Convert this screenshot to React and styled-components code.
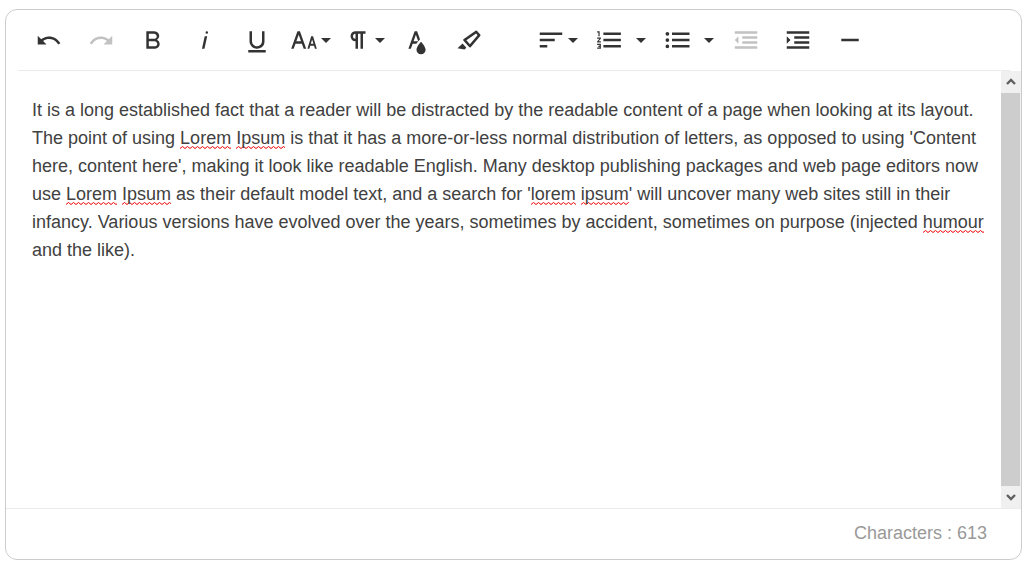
import React from "react";
import styled, { createGlobalStyle } from "styled-components";

const GlobalStyle = createGlobalStyle`
  *, *::before, *::after { box-sizing: border-box; }
  body {
    margin: 0;
    background: #fff;
    font-family: "Liberation Sans", Arial, sans-serif;
    color: #414141;
  }
`;

const Page = styled.main`
  display: flex;
  min-height: 100vh;
  padding: 9px 5px;
`;

const Editor = styled.section`
  flex: 1;
  min-width: 0;
  display: flex;
  flex-direction: column;
  border: 1px solid #ccc;
  border-radius: 12px;
  overflow: hidden;
`;

const Toolbar = styled.div`
  display: flex;
  align-items: center;
  margin: 0 11px 0 12px;
  height: 61px;
  padding-left: 5px;
  border-bottom: 1px solid #ebebeb;
`;

const Group = styled.div`
  display: flex;
  & + & { margin-left: 35px; }
`;

const ToolButton = styled.button`
  display: flex;
  align-items: center;
  justify-content: center;
  flex: none;
  gap: 2px;
  width: ${(p) => p.$width || 52}px;
  height: 48px;
  padding: 0;
  border: 0;
  background: transparent;
  color: #333;
  cursor: pointer;
  &:disabled { color: #c2c2c2; cursor: default; }
`;

const CaretButton = styled(ToolButton)`
  width: 18px;
  justify-content: flex-start;
  padding-left: 2px;
`;

const Icon = styled.svg`
  display: block;
  width: 30px;
  height: 30px;
  fill: currentColor;
  flex: none;
`;

const CaretIcon = styled.svg`
  display: block;
  width: 10px;
  height: 5px;
  fill: currentColor;
  flex: none;
`;

const Body = styled.div`
  flex: 1;
  display: flex;
  min-height: 200px;
`;

const Content = styled.div`
  flex: 1;
  min-width: 0;
  padding: 25px 10px 25px 26px;
  font-size: 18px;
  line-height: 28px;
  outline: none;
  p { margin: 0; }
`;

const Misspelled = styled.span`
  padding-bottom: 1px;
  background: url("data:image/svg+xml,%3Csvg xmlns='http://www.w3.org/2000/svg' width='5' height='3'%3E%3Cpath d='M-2.500 .5L0 2.500L2.500 .5L5 2.500L7.500 .5' fill='none' stroke='%23f00000'/%3E%3C/svg%3E")
    repeat-x left bottom;
`;

const ScrollRail = styled.div`
  display: flex;
  flex-direction: column;
  width: 20px;
  background: #f0f0f0;
`;

const ScrollButton = styled.button`
  display: flex;
  align-items: center;
  justify-content: center;
  height: 22px;
  padding: 0;
  border: 0;
  background: #f0f0f0;
  color: #606060;
`;

const ScrollArrow = styled.svg`
  width: 12px;
  height: 8px;
  fill: none;
  stroke: currentColor;
  stroke-width: 2.4;
`;

const ScrollThumb = styled.div`
  flex: 1;
  margin-right: 1px;
  background: #cdcdcd;
`;

const Footer = styled.footer`
  display: flex;
  align-items: center;
  justify-content: flex-end;
  height: 51px;
  padding: 0 34px 2px 0;
  border-top: 1px solid #ebebeb;
  font-size: 18px;
  color: #999;
`;

const paths = {
  undo: "M10.4 9.4c-1.7.3-3.2.9-4.6 2L3 8.5v7h7l-2.7-2.7c3.7-2.6 8.8-1.8 11.5 1.9.2.2.4.5.5.8l1.8-.9c-2.3-3.9-6.6-6-10.7-5.2z",
  redo: "M13.6 9.4c1.7.3 3.2.9 4.6 2L21 8.5v7h-7l2.7-2.7C13 10.2 7.9 11 5.3 14.7c-.2.3-.4.5-.5.8L3 14.6C5.1 10.8 9.3 8.7 13.6 9.4z",
  bold: "M15.25,11.8h0A3.68,3.68,0,0,0,17,9a3.93,3.93,0,0,0-3.86-4H6.65V19h7a3.74,3.74,0,0,0,3.7-3.78V15.1A3.64,3.64,0,0,0,15.25,11.8ZM8.65,7h4.2a2.09,2.09,0,0,1,2,1.3,2.09,2.09,0,0,1-1.37,2.61,2.23,2.23,0,0,1-.63.09H8.65Zm4.6,10H8.65V13h4.6a2.09,2.09,0,0,1,2,1.3,2.09,2.09,0,0,1-1.37,2.61A2.23,2.23,0,0,1,13.25,17Z",
  italic: "M11.76,9h2l-2.2,10h-2Zm1.68-4a1,1,0,1,0,1,1,1,1,0,0,0-1-1Z",
  underline: "M19,20v2H5V20ZM16,13.2a4,4,0,0,1-5.74,3.4A3.75,3.75,0,0,1,8,13.085V5H6v8.21a6,6,0,0,0,8,5.44A5.851,5.851,0,0,0,18,13V5H16Z",
  size: "M20.75,19h1.5l-3-10h-1.5l-3,10h1.5L17,16.5h3Zm-3.3-4,1.05-3.5L19.55,15Zm-5.7,4h2l-5-14h-2l-5,14h2l1.43-4h5.14ZM5.89,13,7.75,7.79,9.61,13Z",
  paragraph: "M10.15,5A4.11,4.11,0,0,0,6.08,8.18,4,4,0,0,0,10,13v6h2V7h2V19h2V7h2V5ZM8,9a2,2,0,0,1,2-2v4A2,2,0,0,1,8,9Z",
  color: "M15.2,13.494s-3.6,3.9-3.6,6.3a3.65,3.65,0,0,0,7.3.1v-.1C18.9,17.394,15.2,13.494,15.2,13.494Zm-1.47-1.357.669-.724L12.1,5h-2l-5,14h2l1.43-4h2.943A24.426,24.426,0,0,1,13.726,12.137ZM11.1,7.8l1.86,5.2H9.244Z",
  highlight: "M9.918,12.241l7.748-5.39,1.179,1.296-6.094,7.207L9.918,12.241M7.587,12.652l4.536,4.983a.934.934,0,0,0,1.395-.091L20.969,8.731A.908.908,0,0,0,20.991,7.533l-2.513-2.761a.908.908,0,0,0-1.195-.091L7.809,11.271A.934.934,0,0,0,7.587,12.652ZM2.794,18.528,8.411,19.5l1.479-1.346-3.029-3.328Z",
  align: "M3 18h6v-2H3v2zM3 6v2h18V6H3zm0 7h12v-2H3v2z",
  ordered: "M2.5,16h2v.5h-1v1h1V18h-2v1h3V15h-3Zm1-7h1V5h-2V6h1Zm-1,2H4.3L2.5,13.1V14h3V13H3.7l1.8-2.1V10h-3Zm5-5V8h14V6Zm0,12h14V16H7.5Zm0-5h14V11H7.5Z",
  bullets: "M4.3 5.5a1.5 1.5 0 1 0 0 3a1.5 1.5 0 0 0 0-3zm0 5a1.5 1.5 0 1 0 0 3a1.5 1.5 0 0 0 0-3zm0 5a1.5 1.5 0 1 0 0 3a1.5 1.5 0 0 0 0-3zM8 6h14v2H8zm0 5h14v2H8zm0 5h14v2H8z",
  outdent: "M3 5h18v2H3zM9 9h12v2H9zM9 13h12v2H9zM3 17h18v2H3zM3 12l3-3v6z",
  indent: "M3 5h18v2H3zM9 9h12v2H9zM9 13h12v2H9zM3 17h18v2H3zM6 12l-3-3v6z",
  rule: "M5 11h14v2H5z",
};

const Glyph = ({ name }) => (
  <Icon viewBox="0 0 24 24" aria-hidden="true"><path d={paths[name]} /></Icon>
);

const Caret = () => (
  <CaretIcon viewBox="0 0 10 5" aria-hidden="true"><path d="M0 0h10L5 5z" /></CaretIcon>
);

const Tool = ({ name, label, disabled }) => (
  <ToolButton type="button" aria-label={label} disabled={disabled}><Glyph name={name} /></ToolButton>
);

const MenuTool = ({ name, label }) => (
  <ToolButton type="button" aria-label={label} aria-haspopup="true" $width={54}>
    <Glyph name={name} /><Caret />
  </ToolButton>
);

const SplitTool = ({ name, label }) => (
  <>
    <ToolButton type="button" aria-label={label} $width={50}><Glyph name={name} /></ToolButton>
    <CaretButton type="button" aria-label={`${label} options`} aria-haspopup="true"><Caret /></CaretButton>
  </>
);

export default function App() {
  return (
    <>
      <GlobalStyle />
      <Page>
        <Editor>
          <Toolbar role="toolbar" aria-label="Formatting">
            <Group>
              <Tool name="undo" label="Undo" />
              <Tool name="redo" label="Redo" disabled />
              <Tool name="bold" label="Bold" />
              <Tool name="italic" label="Italic" />
              <Tool name="underline" label="Underline" />
              <MenuTool name="size" label="Font size" />
              <MenuTool name="paragraph" label="Paragraph format" />
              <Tool name="color" label="Text color" />
              <Tool name="highlight" label="Background color" />
            </Group>
            <Group>
              <MenuTool name="align" label="Align" />
              <SplitTool name="ordered" label="Ordered list" />
              <SplitTool name="bullets" label="Unordered list" />
              <Tool name="outdent" label="Decrease indent" disabled />
              <Tool name="indent" label="Increase indent" />
              <Tool name="rule" label="Insert horizontal line" />
            </Group>
          </Toolbar>
          <Body>
            <Content
              role="textbox"
              aria-multiline="true"
              aria-label="Document text"
              contentEditable
              suppressContentEditableWarning
              spellCheck={false}
            >
              <p>
                It is a long established fact that a reader will be distracted by the readable content of a page
                when looking at its layout. The point of using <Misspelled>Lorem</Misspelled>{" "}
                <Misspelled>Ipsum</Misspelled> is that it has a more-or-less normal distribution of letters, as
                opposed to using 'Content here, content here', making it look like readable English. Many desktop
                publishing packages and web page editors now use <Misspelled>Lorem</Misspelled>{" "}
                <Misspelled>Ipsum</Misspelled> as their default model text, and a search for '
                <Misspelled>lorem</Misspelled> <Misspelled>ipsum</Misspelled>' will uncover many web sites still in
                their infancy. Various versions have evolved over the years, sometimes by accident, sometimes on
                purpose (injected <Misspelled>humour</Misspelled> and the like).
              </p>
            </Content>
            <ScrollRail>
              <ScrollButton type="button" aria-label="Scroll up">
                <ScrollArrow viewBox="0 0 12 8"><path d="M2 6l4-4 4 4" /></ScrollArrow>
              </ScrollButton>
              <ScrollThumb />
              <ScrollButton type="button" aria-label="Scroll down">
                <ScrollArrow viewBox="0 0 12 8"><path d="M2 2l4 4 4-4" /></ScrollArrow>
              </ScrollButton>
            </ScrollRail>
          </Body>
          <Footer>Characters : 613</Footer>
        </Editor>
      </Page>
    </>
  );
}
